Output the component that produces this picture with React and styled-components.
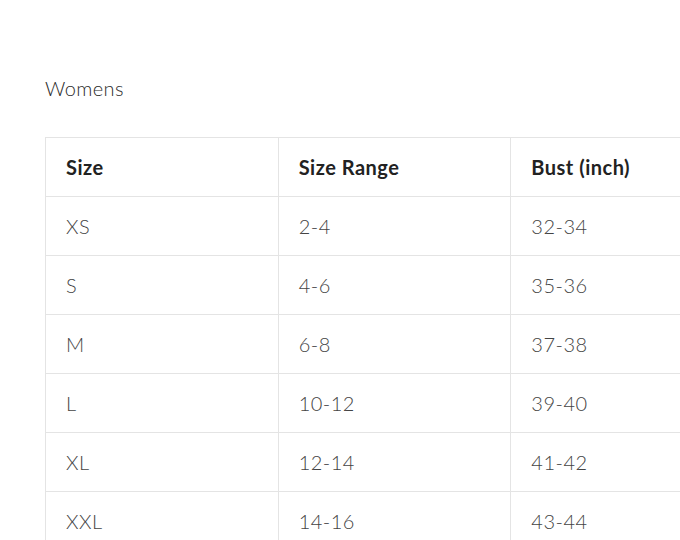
import React from 'react'
import styled, { createGlobalStyle } from 'styled-components'

const GlobalStyle = createGlobalStyle`
  html, body {
    margin: 0;
    padding: 0;
    background: #fff;
    overflow: hidden;
  }
  body {
    font-family: Lato, "Open Sans", sans-serif;
  }
`;

const Page = styled.div`
  width: 680px;
  height: 540px;
  overflow: hidden;
  padding: 76px 0 0 45px;
  box-sizing: border-box;
`;

const Heading = styled.h3`
  margin: 0 0 37px;
  font-size: 20px;
  font-weight: 300;
  letter-spacing: 0.4px;
  color: #2a2a2a;
  line-height: 24px;
`;

// three 233px columns: the right edge of the table sits past the window
const Table = styled.table`
  border-collapse: collapse;
  width: 699px;
  table-layout: fixed;
`;

const Cell = styled.td`
  height: 58px;
  padding: 0 20px;
  border: 1px solid #e4e4e4;
  font-size: 20px;
  letter-spacing: 0.5px;
  font-weight: ${(p) => (p.$head ? 700 : 300)};
  color: ${(p) => (p.$head ? '#222' : '#444')};
  text-align: left;
  vertical-align: middle;
  white-space: nowrap;
`;

const headers = ['Size', 'Size Range', 'Bust (inch)'];

const rows = [
  ['XS', '2-4', '32-34'],
  ['S', '4-6', '35-36'],
  ['M', '6-8', '37-38'],
  ['L', '10-12', '39-40'],
  ['XL', '12-14', '41-42'],
  ['XXL', '14-16', '43-44'],
];

const App = () => (
  <>
    <GlobalStyle />
    <Page>
      <Heading>Womens</Heading>
      <Table>
        <thead>
          <tr>
            {headers.map((h) => (
              <Cell as="th" $head key={h}>{h}</Cell>
            ))}
          </tr>
        </thead>
        <tbody>
          {rows.map((r) => (
            <tr key={r[0]}>
              {r.map((c, i) => (
                <Cell key={i}>{c}</Cell>
              ))}
            </tr>
          ))}
        </tbody>
      </Table>
    </Page>
  </>
);

export default App
